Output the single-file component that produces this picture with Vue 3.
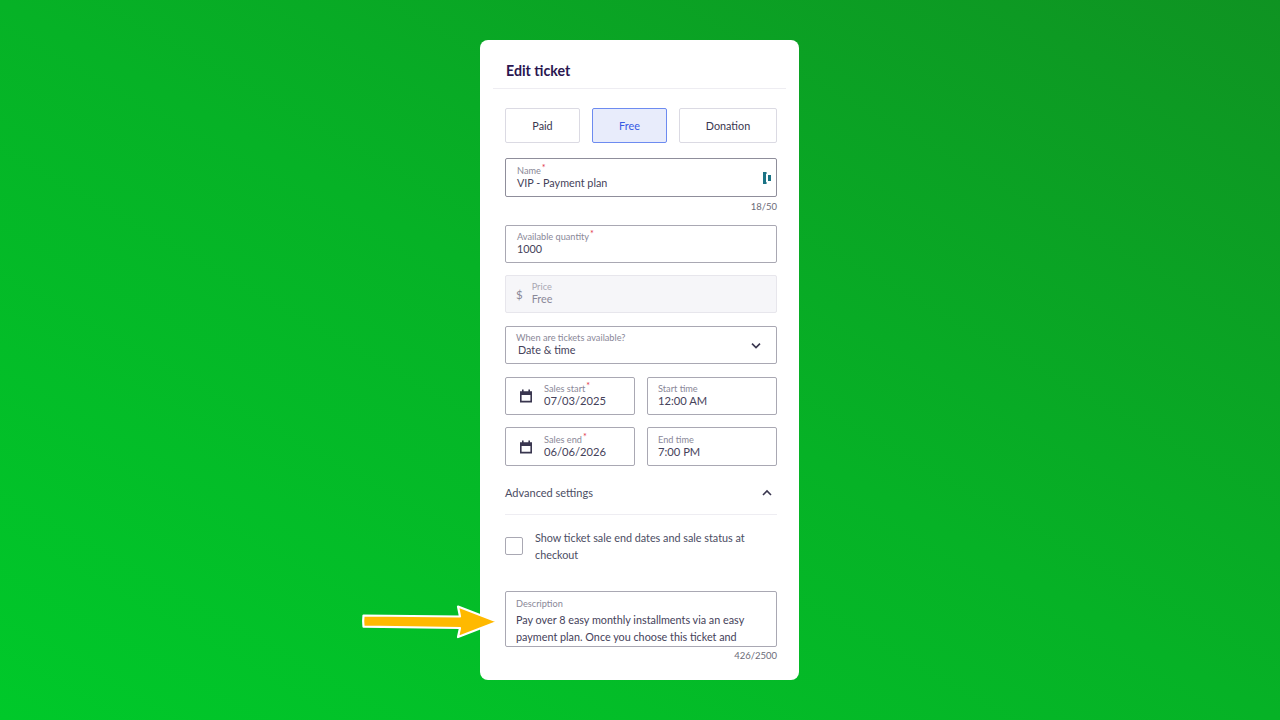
<script setup>
const ticketTypes = [
  { label: 'Paid', cls: 'w-paid' },
  { label: 'Free', cls: 'w-free active' },
  { label: 'Donation', cls: 'w-donation' },
]
const schedule = [
  { label: 'Sales start', date: '07/03/2025', timeLabel: 'Start time', time: '12:00 AM' },
  { label: 'Sales end', date: '06/06/2026', timeLabel: 'End time', time: '7:00 PM' },
]
</script>

<template>
  <main class="page">
    <section class="card">
      <h1 class="title">Edit ticket</h1>
      <div class="form">
        <div class="types">
          <button v-for="t in ticketTypes" :key="t.label" class="type" :class="t.cls">{{ t.label }}</button>
        </div>

        <div class="field name-field">
          <div class="stack">
            <span class="label">Name<i class="req">*</i></span>
            <span class="value">VIP - Payment plan</span>
          </div>
          <svg class="grammar" width="8" height="12" viewBox="0 0 8 12">
            <path d="M0 0h3v12H0z" fill="#1b7385" />
            <path d="M3 0h1v2H3z M3 10h1v2H3z" fill="#1b7385" opacity=".55" />
            <path d="M5 3h3v6H5z" fill="#1b7385" />
          </svg>
        </div>
        <div class="count">18/50</div>

        <div class="field qty-field">
          <div class="stack">
            <span class="label">Available quantity<i class="req">*</i></span>
            <span class="value">1000</span>
          </div>
        </div>

        <div class="field price-field">
          <span class="dollar">$</span>
          <div class="stack">
            <span class="label">Price</span>
            <span class="value">Free</span>
          </div>
        </div>

        <div class="field when-field">
          <div class="stack">
            <span class="label">When are tickets available?</span>
            <span class="value when-value">Date &amp; time</span>
          </div>
          <svg class="chev" width="12" height="8" viewBox="0 0 12 8">
            <path d="M2 1.6 6 5.6l4-4" fill="none" stroke="#39364f" stroke-width="1.6" />
          </svg>
        </div>

        <div v-for="row in schedule" :key="row.label" class="sched">
          <div class="field date-field">
            <svg class="cal" width="14" height="14" viewBox="0 0 14 14">
              <path d="M3 .6h1.6v1.6h4.8V.6H11v1.6h2V13.4H1V2.2h2z M2.6 6v5.8h8.8V6z" fill="#39364f" fill-rule="evenodd" />
            </svg>
            <div class="stack">
              <span class="label">{{ row.label }}<i class="req">*</i></span>
              <span class="value date-value">{{ row.date }}</span>
            </div>
          </div>
          <div class="field time-field">
            <div class="stack">
              <span class="label">{{ row.timeLabel }}</span>
              <span class="value date-value">{{ row.time }}</span>
            </div>
          </div>
        </div>

        <div class="advanced">
          <span>Advanced settings</span>
          <svg width="12" height="8" viewBox="0 0 12 8">
            <path d="M2 6 6 2l4 4" fill="none" stroke="#39364f" stroke-width="1.6" />
          </svg>
        </div>

        <div class="check-row">
          <span class="box"></span>
          <p>Show ticket sale end dates and sale status at checkout</p>
        </div>

        <div class="field desc-field">
          <span class="label">Description</span>
          <p class="desc">Pay over 8 easy monthly installments via an easy payment plan. Once you choose this ticket and</p>
        </div>
        <div class="count desc-count">426/2500</div>
      </div>

      <svg class="arrow" width="146" height="44" viewBox="0 0 146 44">
        <path d="M3.5 14.5 100 15.5 98 5.5 137.5 20.8 98 36 100 27 3.5 25.6Q2.8 20 3.5 14.5Z" fill="#ffb900" stroke="#fff" stroke-width="2.2" stroke-linejoin="round" />
      </svg>
    </section>
  </main>
</template>

<style>
html, body { margin: 0; }
</style>

<style scoped>
.page {
  width: 1280px;
  height: 720px;
  overflow: hidden;
  box-sizing: border-box;
  padding-top: 40px;
  background: linear-gradient(to top right, #00c92a 0%, #06b226 50%, #0f9322 100%);
  font-family: Lato, "Liberation Sans", sans-serif;
  color: #39364f;
}
.card {
  position: relative;
  box-sizing: border-box;
  width: 319px;
  height: 640px;
  margin-left: 480px;
  padding: 0 13px;
  background: #fff;
  border-radius: 8px;
}
.title {
  margin: 0;
  height: 49px;
  box-sizing: border-box;
  padding: 22px 0 0 13px;
  font-size: 14.2px;
  line-height: 18px;
  font-weight: 700;
  color: #2a1650;
  border-bottom: 1px solid #eeedf2;
}
.form {
  width: 272px;
  margin-left: 12px;
  padding-top: 19px;
}
.types { display: flex; gap: 12px; }
.type {
  height: 35px;
  padding: 0 0 1px;
  background: #fff;
  border: 1px solid #dbdae3;
  border-radius: 2px;
  font: 400 10.8px Lato, "Liberation Sans", sans-serif;
  color: #39364f;
}
.w-paid, .w-free { width: 75px; }
.w-donation { width: 98px; }
.type.active {
  background: #e8ecfb;
  border-color: #6d8bf0;
  color: #3659e3;
}
.field {
  box-sizing: border-box;
  display: flex;
  align-items: center;
  border: 1px solid #a9a8b3;
  border-radius: 2px;
  background: #fff;
}
.stack {
  display: flex;
  flex-direction: column;
  min-width: 0;
  padding-bottom: 2px;
}
.label {
  display: block;
  font-size: 9.2px;
  line-height: 11px;
  color: #8a8898;
}
.req {
  position: relative;
  top: -3px;
  margin-left: 1px;
  font-style: normal;
  font-size: 9px;
  line-height: 0;
  color: #e0344a;
}
.value {
  font-size: 10.8px;
  line-height: 13px;
  color: #45425a;
}
.date-value { font-size: 11.2px; }
.name-field {
  justify-content: space-between;
  height: 39px;
  margin-top: 15px;
  padding: 0 5px 0 11px;
  border-color: #8f8e9b;
}
.grammar { margin-top: 1px; }
.count {
  margin-top: 4px;
  text-align: right;
  font-size: 9.5px;
  line-height: 11px;
  color: #6b6b78;
}
.qty-field {
  height: 38px;
  margin-top: 13px;
  padding-left: 11px;
}
.price-field {
  height: 38px;
  margin-top: 12px;
  padding-left: 10px;
  gap: 9px;
  background: #f6f6f9;
  border-color: #e7e6ec;
}
.price-field .label { color: #a9a8b3; }
.price-field .value { color: #8a8898; }
.dollar { font-size: 11.5px; color: #8a8898; }
.when-field {
  justify-content: space-between;
  height: 38px;
  margin-top: 13px;
  padding: 0 14px 0 10px;
}
.when-value { margin-left: 2px; }
.chev { margin-top: 1px; }
.sched {
  display: grid;
  grid-template-columns: 130px 130px;
  gap: 12px;
  margin-top: 13px;
}
.sched .field { height: 38px; }
.sched + .sched { margin-top: 12px; }
.sched + .sched .field { height: 39px; }
.date-field { padding-left: 13px; gap: 11px; }
.time-field { padding-left: 10px; }
.advanced {
  display: flex;
  justify-content: space-between;
  align-items: center;
  box-sizing: border-box;
  height: 49px;
  padding: 5px 4px 0 0;
  border-bottom: 1px solid #eeedf2;
  font-size: 11px;
  color: #4b4d63;
}
.check-row {
  display: flex;
  align-items: center;
  gap: 12px;
  margin-top: 14px;
}
.box {
  flex: none;
  box-sizing: border-box;
  width: 18px;
  height: 18px;
  border: 1px solid #a9a8b3;
  border-radius: 2px;
}
.check-row p {
  margin: 0;
  font-size: 10.8px;
  line-height: 17px;
  color: #4b4d63;
}
.desc-field {
  display: block;
  height: 56px;
  margin-top: 28px;
  padding: 6px 10px 0;
  overflow: hidden;
}
.desc {
  margin: 1.5px 0 0;
  font-size: 10.8px;
  line-height: 17px;
  color: #45425a;
}
.desc-count { margin-top: 3px; }
.arrow {
  position: absolute;
  left: -120px;
  top: 561px;
}
</style>
